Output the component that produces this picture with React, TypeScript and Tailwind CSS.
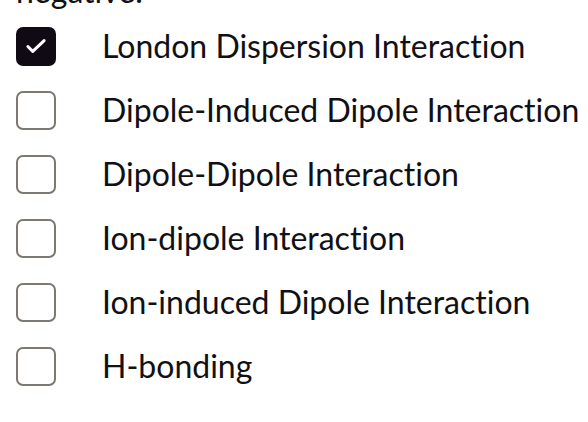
import { useState } from 'react';

type TOption = {
    id: number
    label: string
}

const options: TOption[] = [
    { id: 1, label: "London Dispersion Interaction" },
    { id: 2, label: "Dipole-Induced Dipole Interaction" },
    { id: 3, label: "Dipole-Dipole Interaction" },
    { id: 4, label: "Ion-dipole Interaction" },
    { id: 5, label: "Ion-induced Dipole Interaction" },
    { id: 6, label: "H-bonding" },
]

export default function App() {

    const [checked, setChecked] = useState<number[]>([1]);

    const toggle = (id: number) => {
        setChecked(checked.includes(id) ? checked.filter(c => c !== id) : [...checked, id])
    }

    return (
        <div className="w-[588px] h-[422px] overflow-hidden bg-white text-[#111014] font-['Lato',sans-serif] [font-variant-ligatures:none]">
            <p className="text-[32px] leading-none mt-[-25px] pl-[16px]">negative.</p>
            <ul className="mt-[7px] flex flex-col">
                {options.map(option => {
                    const isChecked = checked.includes(option.id)
                    return (
                        <li
                            key={option.id}
                            className="flex items-center h-[64px] pl-[16px] cursor-pointer whitespace-nowrap"
                            onClick={() => toggle(option.id)}
                        >
                            <span
                                className={
                                    isChecked
                                        ? "flex items-center justify-center w-[40px] h-[39px] rounded-[7px] bg-[#0f0a14] shrink-0"
                                        : "flex items-center justify-center w-[40px] h-[39px] rounded-[7px] border-2 border-[#7d7870] bg-white shrink-0"
                                }
                            >
                                {isChecked && (
                                    <svg width="26" height="26" viewBox="0 0 24 24" fill="none" stroke="white" strokeWidth="2.8" strokeLinecap="round" strokeLinejoin="round">
                                        <path d="M4.5 12.5l4.5 4.5L19.5 7" />
                                    </svg>
                                )}
                            </span>
                            <span className="ml-[46px] text-[32px]">{option.label}</span>
                        </li>
                    )
                })}
            </ul>
        </div>
    )
}
